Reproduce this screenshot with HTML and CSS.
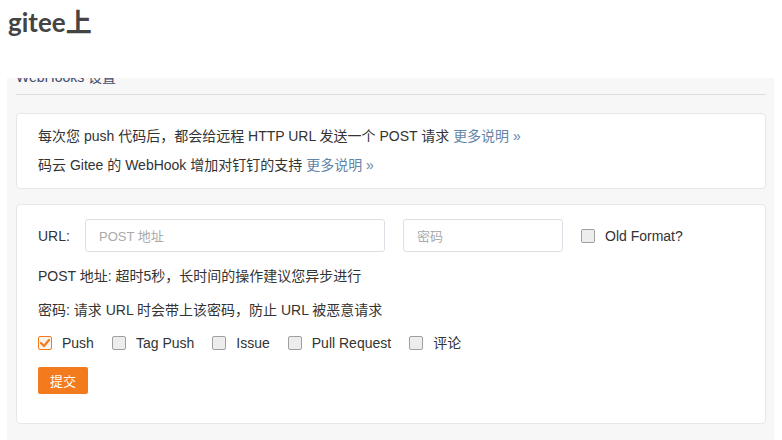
FILE: index.html
```
<!DOCTYPE html>
<html lang="zh-CN">
<head>
<meta charset="utf-8">
<title>gitee上</title>
<link rel="stylesheet" href="styles.css">
</head>
<body>
<h1 class="page-title">gitee上</h1>
<div class="panel">
  <div class="panel-title">WebHooks 设置</div>
  <div class="divider"></div>
  <div class="card info">
    <p>每次您 push 代码后，都会给远程 HTTP URL 发送一个 POST 请求 <a class="link" href="#">更多说明 »</a></p>
    <p>码云 Gitee 的 WebHook 增加对钉钉的支持 <a class="link" href="#">更多说明 »</a></p>
  </div>
  <div class="card form">
    <div class="row-inputs">
      <span class="label">URL:</span>
      <span class="input url"><span class="placeholder">POST 地址</span></span>
      <span class="input pwd"><span class="placeholder">密码</span></span>
      <span class="check-item old">
        <span class="box"></span>
        <span class="check-text">Old Format?</span>
      </span>
    </div>
    <p class="hint">POST 地址: 超时5秒，长时间的操作建议您异步进行</p>
    <p class="hint">密码: 请求 URL 时会带上该密码，防止 URL 被恶意请求</p>
    <div class="events">
      <span class="check-item">
        <span class="box checked"><svg width="14" height="14" viewBox="0 0 14 14"><polyline points="3,7 6,10 11,4" fill="none" stroke="#f37b1d" stroke-width="2.2" stroke-linecap="round" stroke-linejoin="round"/></svg></span>
        <span class="check-text">Push</span>
      </span>
      <span class="check-item">
        <span class="box"></span>
        <span class="check-text">Tag Push</span>
      </span>
      <span class="check-item">
        <span class="box"></span>
        <span class="check-text">Issue</span>
      </span>
      <span class="check-item">
        <span class="box"></span>
        <span class="check-text">Pull Request</span>
      </span>
      <span class="check-item">
        <span class="box"></span>
        <span class="check-text">评论</span>
      </span>
    </div>
    <div class="actions">
      <button class="btn-submit" type="button">提交</button>
    </div>
  </div>
</div>
</body>
</html>
```
FILE: styles.css
```
html, body {
  margin: 0;
  padding: 0;
  background: #ffffff;
}

body {
  font-family: "Liberation Sans", "Noto Sans CJK SC", sans-serif;
  font-size: 14px;
  color: #333333;
  overflow: hidden;
}

.page-title {
  margin: 0;
  height: 78px;
  box-sizing: border-box;
  padding: 6px 0 0 8px;
  font-family: "Lato", "Noto Sans CJK SC", sans-serif;
  font-weight: 700;
  font-size: 26px;
  line-height: 32px;
  color: #444444;
}

.panel {
  margin-left: 7px;
  width: 767px;
  box-sizing: border-box;
  padding: 0 8px 30px 9px;
  background: #f7f7f7;
  overflow: hidden;
}

.panel-title {
  margin-top: -11px;
  font-size: 14px;
  line-height: 20px;
  color: #3d4b6b;
}

.divider {
  margin-top: 7px;
  border-top: 1px solid #dddddd;
}

.card {
  background: #ffffff;
  border: 1px solid #e4e7eb;
  border-radius: 4px;
}

.info {
  margin-top: 18px;
  padding: 8px 21px;
}

.info p {
  margin: 0;
  line-height: 29px;
}

.link {
  color: #6385a8;
  text-decoration: none;
}

.form {
  margin-top: 15px;
  padding: 14px 21px 29px;
}

.row-inputs {
  display: flex;
  align-items: center;
  height: 33px;
}

.label {
  width: 47px;
  flex: none;
}

.input {
  height: 33px;
  box-sizing: border-box;
  border: 1px solid #dcdfe6;
  border-radius: 3px;
  padding-left: 13px;
  display: flex;
  align-items: center;
  flex: none;
}

.input.url {
  width: 300px;
  margin-right: 18px;
}

.input.pwd {
  width: 160px;
  margin-right: 18px;
}

.placeholder {
  color: #aaaaaa;
  font-size: 13px;
}

.hint {
  margin: 14px 0 0;
  line-height: 20px;
}

.events {
  margin-top: 13px;
  display: flex;
  align-items: center;
  gap: 18px;
  line-height: 20px;
}

.check-item {
  display: inline-flex;
  align-items: center;
  gap: 10px;
}

.box {
  width: 14px;
  height: 14px;
  box-sizing: border-box;
  border: 1px solid #a0a0a0;
  border-radius: 2px;
  background: #ededed;
  display: inline-block;
  flex: none;
  position: relative;
}

.box svg {
  position: absolute;
  left: -1px;
  top: -1px;
}

.box.checked {
  border-color: #f37b1d;
  background: #fdf3ea;
}

.check-text {
  color: #333333;
}

.old .check-text {
  font-size: 14px;
}

.actions {
  margin-top: 14px;
}

.btn-submit {
  width: 50px;
  height: 27px;
  padding: 0;
  border: none;
  border-radius: 2px;
  background: #f37b1d;
  color: #ffffff;
  font-family: "Liberation Sans", "Noto Sans CJK SC", sans-serif;
  font-size: 13px;
  cursor: pointer;
}
```
